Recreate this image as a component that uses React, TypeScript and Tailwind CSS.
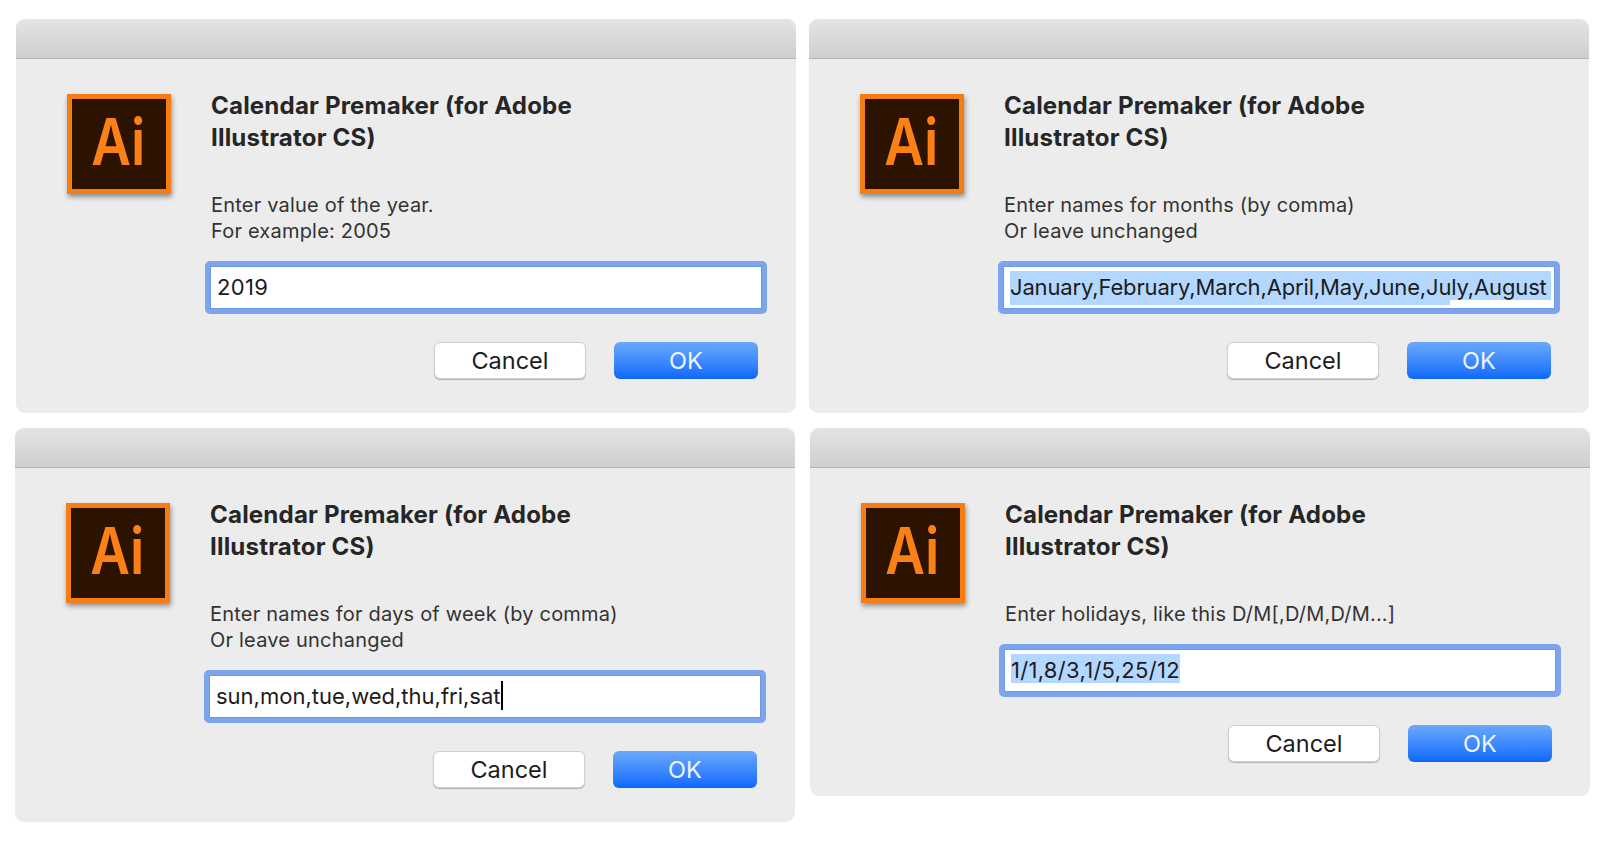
const sans = "font-['Inter','Noto_Sans',sans-serif]";

function AiIcon() {
  return (
    <div className="mt-[4px] flex h-[100px] w-[104px] shrink-0 items-center justify-center border-[5px] border-[#f57d13] bg-[#2b1300] shadow-[1px_3px_5px_rgba(0,0,0,0.4)]">
      <span className="mr-[2px] mb-[5px] scale-x-[0.84] text-[65px] leading-none font-semibold text-[#fb8117]">Ai</span>
    </div>
  );
}

function Dialog({
  lines,
  children,
  className,
}: {
  lines: string[];
  children: React.ReactNode;
  className: string;
}) {
  return (
    <div className={`w-[780px] overflow-hidden rounded-[9px] bg-[#ececec] ${className}`}>
      <div className="h-[40px] border-b border-[#b4b4b4] bg-gradient-to-b from-[#e4e4e4] to-[#cfcfcf]" />
      <div className="flex pt-[31px] pr-[29px] pb-[34px] pl-[51px]">
        <AiIcon />
        <div className="ml-[40px] min-w-0 flex-1">
          <h2 className="text-[24.1px] leading-[31.5px] font-bold tracking-[0.17px] text-[#262626]">
            Calendar Premaker (for Adobe
            <br />
            Illustrator CS)
          </h2>
          <div className="mt-[39px] text-[20px] leading-[26px] tracking-[0.2px] text-[#333333]">
            {lines.map((l) => (
              <p key={l}>{l}</p>
            ))}
          </div>
          <div className="relative mt-[17px] -ml-[6px] flex h-[53px] items-center overflow-hidden rounded-[5px] border-[5px] border-[#7da5ee] bg-white pl-[7px] text-[22px] leading-[33px] whitespace-nowrap text-[#1c1c1c] shadow-[inset_0_0_0_1px_#6f98e4]">
            {children}
          </div>
          <div className="mt-[28px] flex justify-end gap-[28px] pr-[9px]">
            <button className="h-[37px] w-[152px] rounded-[6px] border border-[#cfcfcf] bg-white text-[23.5px] leading-none text-[#1c1c1c] shadow-[0_1px_1px_rgba(0,0,0,0.25)]">
              Cancel
            </button>
            <button className="h-[37px] w-[144px] rounded-[6px] bg-gradient-to-b from-[#6aa8fc] to-[#0868fb] text-[23.5px] leading-none text-[#eef5ff]">
              OK
            </button>
          </div>
        </div>
      </div>
    </div>
  );
}

export default function App() {
  return (
    <div className={`h-[852px] w-[1600px] overflow-hidden bg-white pt-[19px] ${sans}`}>
      <div className="flex flex-col gap-[15px]">
        <div className="flex items-start">
          <Dialog className="ml-[16px]" lines={["Enter value of the year.", "For example: 2005"]}>
            <span className="mb-[4px] h-[29px] tracking-[0.3px]">2019</span>
          </Dialog>
          <Dialog className="ml-[13px]" lines={["Enter names for months (by comma)", "Or leave unchanged"]}>
            <span className="relative mb-[4px] h-[29px] bg-[#b3d7ff] pr-[4px] tracking-[-0.15px]">
              January,February,March,April,May,June,July,August
              <span className="absolute top-full left-0 h-[5px] w-[440px] bg-[#b3d7ff]" />
            </span>
          </Dialog>
        </div>
        <div className="flex items-start">
          <Dialog className="ml-[15px]" lines={["Enter names for days of week (by comma)", "Or leave unchanged"]}>
            <span className="mb-[4px] h-[29px]">sun,mon,tue,wed,thu,fri,sat</span>
            <span className="mb-[3px] h-[29px] w-[2px] bg-black" />
          </Dialog>
          <Dialog className="ml-[15px]" lines={["Enter holidays, like this D/M[,D/M,D/M...]"]}>
            <span className="mb-[4px] h-[29px] bg-[#b3d7ff] tracking-[0.3px]">1/1,8/3,1/5,25/12</span>
          </Dialog>
        </div>
      </div>
    </div>
  );
}
